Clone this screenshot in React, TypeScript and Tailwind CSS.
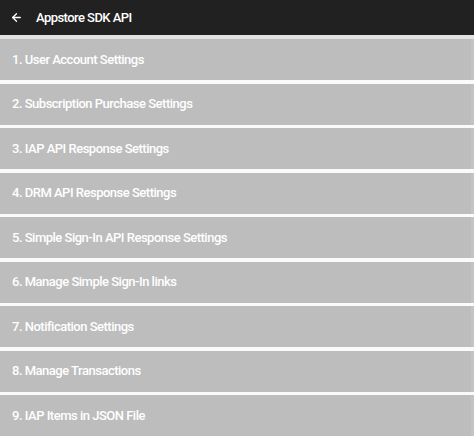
import { ArrowLeft } from "lucide-react";

const items = [
  "1. User Account Settings",
  "2. Subscription Purchase Settings",
  "3. IAP API Response Settings",
  "4. DRM API Response Settings",
  "5. Simple Sign-In API Response Settings",
  "6. Manage Simple Sign-In links",
  "7. Notification Settings",
  "8. Manage Transactions",
  "9. IAP Items in JSON File",
];

export default function App() {
  return (
    <div className="h-[436px] w-[474px] overflow-hidden bg-[#fafafa] font-['Roboto',sans-serif]">
      <div className="flex h-[35px] items-center bg-[#212121] text-white">
        <ArrowLeft className="ml-[10px] h-[13px] w-[13px]" strokeWidth={2.4} />
        <span className="ml-[13px] text-[13px] font-medium tracking-[-0.55px]">Appstore SDK API</span>
      </div>
      <div className="h-[4px] bg-[#e2e2e2]" />
      <div className="flex flex-col gap-[3.5px]">
        {items.map(t => (
          <div key={t} className="flex h-[41px] items-center bg-[#bdbdbd] pl-[12px] border-r-[3px] border-[#c4c4c4]">
            <span className="text-[13px] font-medium tracking-[-0.5px] text-white">{t}</span>
          </div>
        ))}
      </div>
    </div>
  );
}
